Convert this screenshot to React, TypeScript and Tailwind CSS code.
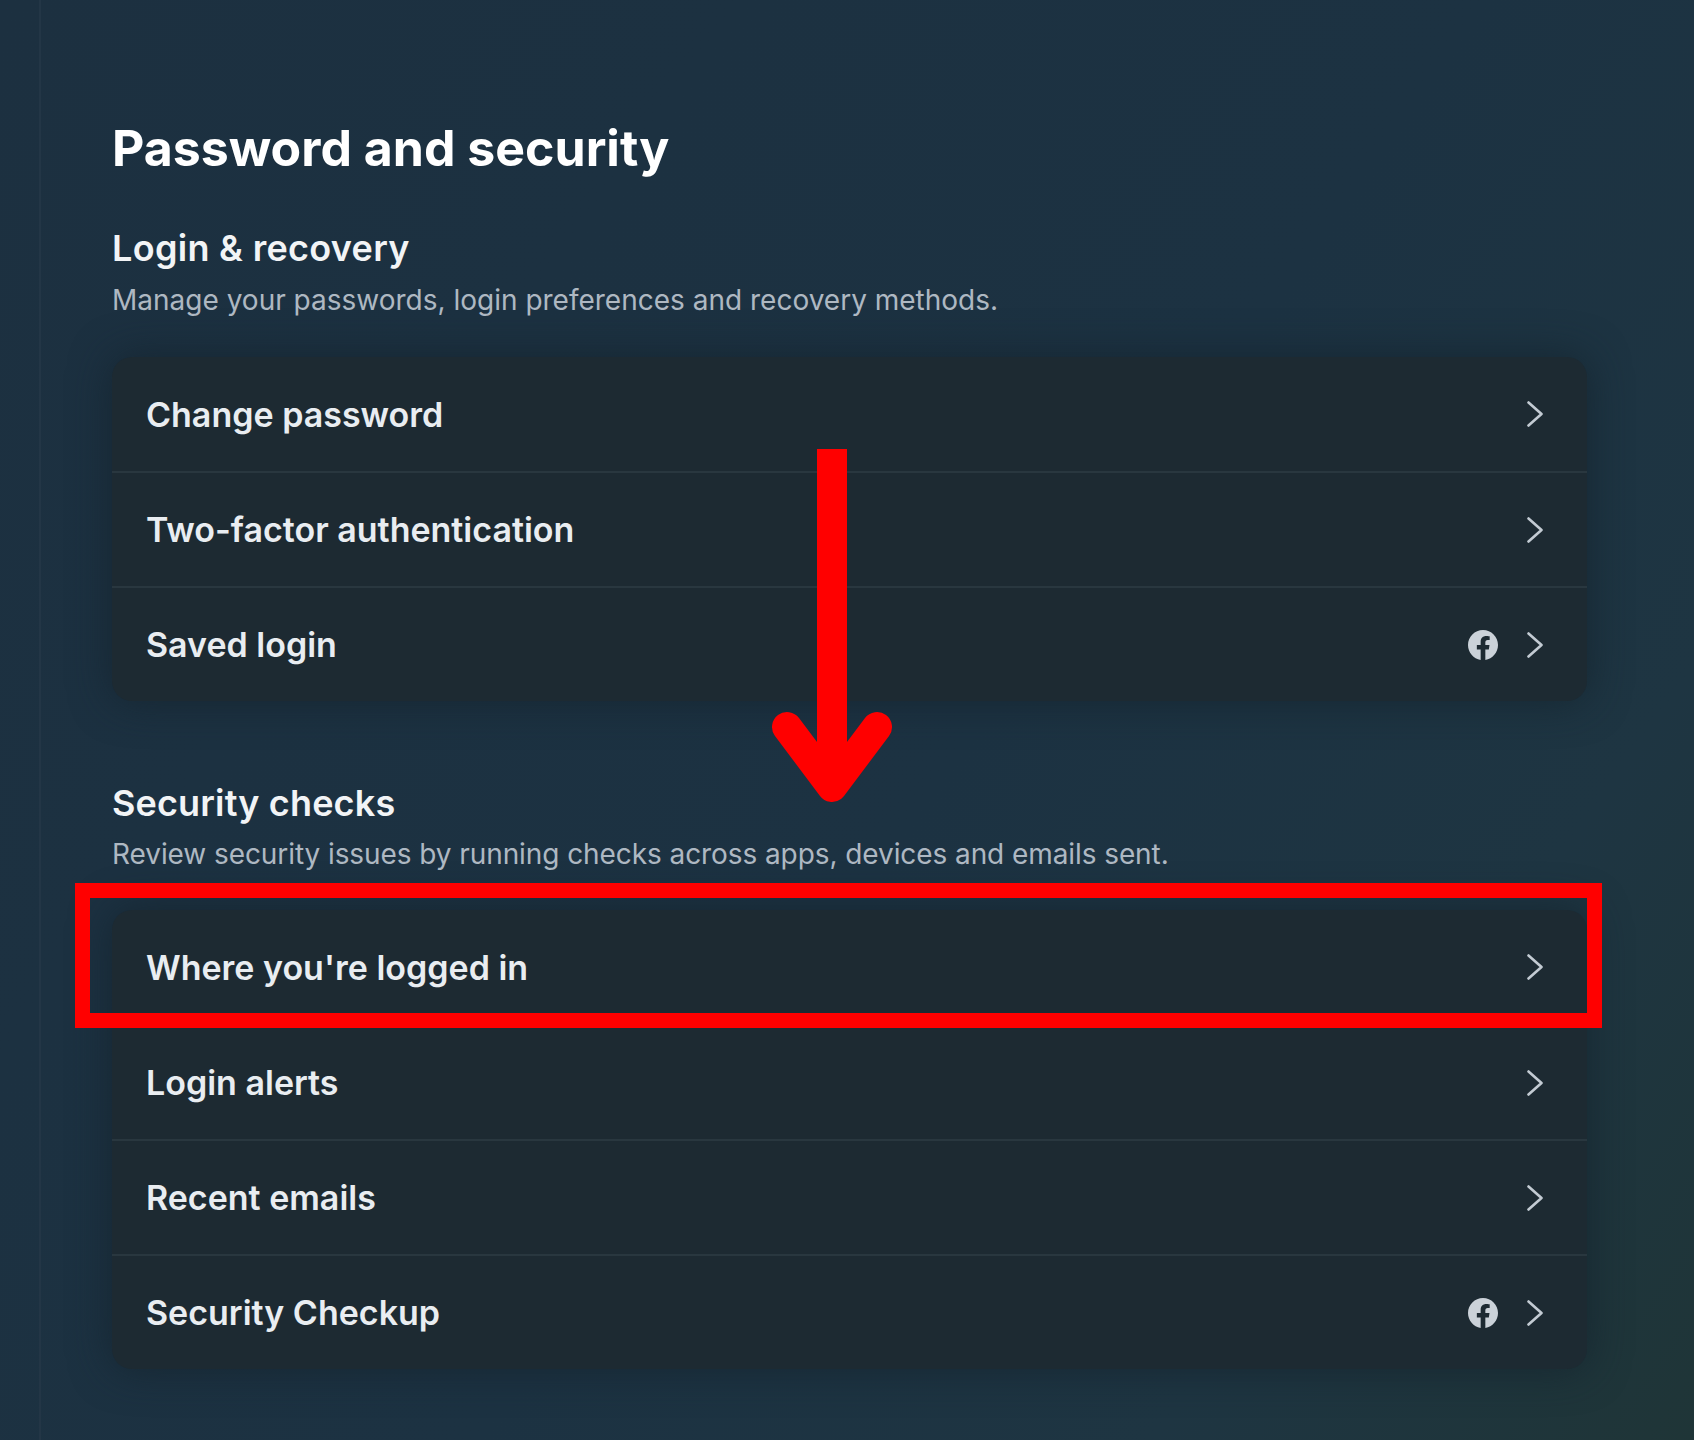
type Item = { label: string; meta?: boolean };

const loginItems: Item[] = [
  { label: 'Change password' },
  { label: 'Two-factor authentication' },
  { label: 'Saved login', meta: true },
];

const checkItems: Item[] = [
  { label: "Where you're logged in" },
  { label: 'Login alerts' },
  { label: 'Recent emails' },
  { label: 'Security Checkup', meta: true },
];

function MetaLogo() {
  return (
    <svg viewBox="0 0 24 24" className="w-[30px] h-[30px] text-[#cbd2d9]" fill="currentColor">
      <path d="M24 12.07C24 5.4 18.63 0 12 0S0 5.4 0 12.07c0 6.02 4.39 11.01 10.13 11.93v-8.44H7.08v-3.49h3.05V9.41c0-3.02 1.79-4.69 4.53-4.69 1.31 0 2.68.24 2.68.24v2.97h-1.51c-1.49 0-1.96.93-1.96 1.89v2.25h3.33l-.53 3.49h-2.8V24C19.61 23.08 24 18.09 24 12.07z" />
    </svg>
  );
}

function Chevron() {
  return (
    <svg viewBox="0 0 16 26" className="w-[16px] h-[26px] text-[#c3cbd3]" fill="none">
      <path d="M1.5 1.5L14.5 13L1.5 24.5" stroke="currentColor" strokeWidth="2.6" strokeLinecap="round" strokeLinejoin="round" />
    </svg>
  );
}

function Card({ items }: { items: Item[] }) {
  return (
    <div className="rounded-[20px] bg-[#1d2a32] shadow-[0_0_40px_rgba(20,35,45,0.8)]">
      {items.map((item, i) => (
        <div
          key={item.label}
          className={`flex items-center justify-between pl-[34px] pr-[44px] ${i > 0 ? 'h-[115px] border-t-2 border-[#29373f]' : 'h-[114px]'}`}
        >
          <span className="text-[34px] font-semibold text-[#e9edf1]">{item.label}</span>
          <div className="flex items-center gap-[29px]">
            {item.meta && <MetaLogo />}
            <Chevron />
          </div>
        </div>
      ))}
    </div>
  );
}

export default function App() {
  return (
    <div className="relative h-[1440px] overflow-hidden flex font-['Inter',sans-serif] bg-[linear-gradient(125deg,#1c3040_0%,#1c3242_55%,#1e3542_80%,#1f3537_100%)]">
      <div className="w-[41px] shrink-0 border-r-2 border-[#233646]" />
      <main className="flex-1 pl-[71px] pr-[107px] pt-[112px]">
        <h1 className="text-[50px] leading-[72px] font-bold text-white">Password and security</h1>

        <h2 className="mt-[39px] text-[36px] leading-[50px] font-semibold text-[#f2f4f6] tracking-[0.3px]">Login &amp; recovery</h2>
        <p className="mt-[7px] text-[28px] leading-[40px] text-[#aeb8c2]">
          Manage your passwords, login preferences and recovery methods.
        </p>
        <div className="mt-[37px]">
          <Card items={loginItems} />
        </div>

        <h2 className="mt-[77px] text-[36px] leading-[50px] font-semibold text-[#f2f4f6] tracking-[0.15px]">Security checks</h2>
        <p className="mt-[6px] text-[28px] leading-[40px] text-[#aeb8c2] tracking-[-0.08px]">
          Review security issues by running checks across apps, devices and emails sent.
        </p>
        <div className="mt-[36px]">
          <Card items={checkItems} />
        </div>
      </main>

      {/* red annotation over the screenshot */}
      <div className="absolute left-[75px] top-[883px] w-[1527px] h-[145px] border-[15px] border-[#ff0000]" />
      <svg className="absolute left-[760px] top-[440px] w-[140px] h-[380px]" viewBox="760 440 140 380" fill="none">
        <path d="M832 449V790" stroke="#ff0000" strokeWidth="30" />
        <path d="M787 727L832 787L877 727" stroke="#ff0000" strokeWidth="30" strokeLinecap="round" strokeLinejoin="round" />
      </svg>
    </div>
  );
}
